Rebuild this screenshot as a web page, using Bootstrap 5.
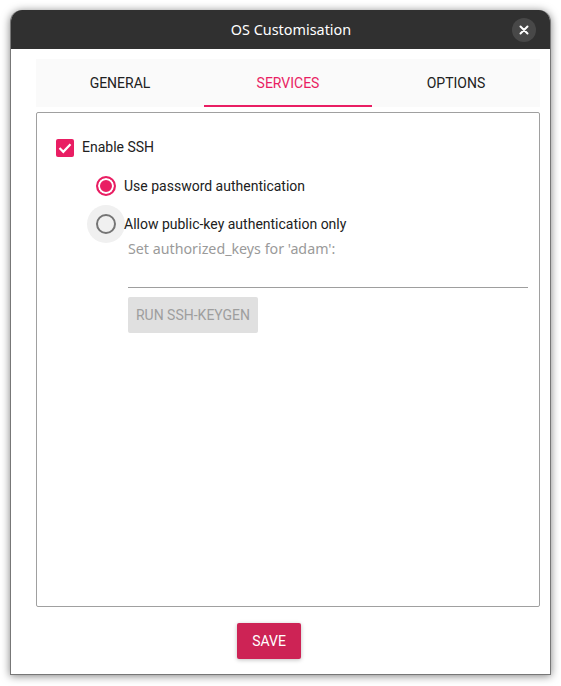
<!DOCTYPE html>
<html lang="en">
<head>
<meta charset="utf-8">
<title>OS Customisation</title>
<link rel="stylesheet" href="https://cdn.jsdelivr.net/npm/bootstrap@5.3.0/dist/css/bootstrap.min.css">
<style>
html, body { height: 100%; }
body { background: #fff; padding: 10px; font-family: Roboto, sans-serif; font-size: 14px; color: #212121; overflow: hidden; }
.os-window { height: 665px; background: #fff; border: 1px solid #777; border-top: 0; border-radius: 12px 12px 0 0; box-shadow: 0 1px 8px rgba(0,0,0,.5); overflow: hidden; }
.os-title { height: 39px; padding-left: 21px; background: #303030; color: #fff; font-family: "Noto Sans", sans-serif; font-size: 14.4px; flex: none; }
.os-close { width: 24px; height: 24px; right: 14px; top: 8px; background: #484848; border: 0; padding: 0; position: absolute; border-radius: 50%; }
.os-body { padding: 10px 10px 15px 25px; min-height: 0; }
.os-tabs { height: 48px; background: #fafafa; flex: none; }
.os-tab { width: 168px; height: 48px; background: none; border: 0; border-bottom: 2px solid transparent; padding: 2px 0 0; font-size: 14px; font-weight: 400; color: #212121; }
.os-tab.is-on { color: #e91e63; border-bottom-color: #e91e63; }
.os-panel { margin-top: 5px; border: 1px solid #a0a0a0; border-radius: 2px; padding: 25px 11px 0 19px; min-height: 0; }
.os-line { height: 20px; }
.os-line-text { margin-top: -1px; }
.os-check { width: 18px; height: 18px; background: #e91e63; border-radius: 2px; flex: none; }
.os-radios { margin: 18px 0 0 40px; }
.os-halo { width: 38px; height: 38px; background: #f0f0f0; border-radius: 50%; flex: none; margin: 0 -1px 0 -9px; }
.os-dot { width: 20px; height: 20px; border-radius: 50%; border: 2px solid #757575; flex: none; }
.os-dot.is-on { border-color: #e91e63; background: #e91e63; box-shadow: inset 0 0 0 2px #fff; }
.os-radio-on { height: 20px; gap: 8px; }
.os-radio-off { height: 38px; margin-top: 9px; }
.os-sub { margin-left: 32px; }
.os-hint { font-family: "Noto Sans", sans-serif; font-size: 14.25px; color: #9a9a9a; line-height: 20px; margin-top: -4px; height: 19px; }
.os-input { height: 30px; border-bottom: 1px solid #9e9e9e; }
.os-keygen { width: 130px; height: 36px; margin-top: 9px; background: #e0e0e0; border: 0; border-radius: 2px; color: #9e9e9e; font-size: 14px; font-weight: 400; padding: 0; }
.os-foot { padding-right: 38px; flex: none; }
.os-save { width: 64px; height: 36px; margin-top: 16px; background: #cd2355; border: 0; border-radius: 2px; color: #fff; font-size: 14px; font-weight: 400; padding: 0; box-shadow: 0 1px 4px rgba(0,0,0,.25); }
</style>
</head>
<body>
<div class="os-window d-flex flex-column">
  <div class="os-title d-flex align-items-center justify-content-center position-relative">
    <span>OS Customisation</span>
    <button class="os-close d-flex align-items-center justify-content-center" aria-label="Close">
      <svg width="10" height="10" viewBox="0 0 10 10"><path d="M1.5 1.5l7 7M8.500 1.500l-7 7" stroke="#fff" stroke-width="2" stroke-linecap="round"/></svg>
    </button>
  </div>
  <div class="os-body d-flex flex-column flex-grow-1">
    <div class="os-tabs d-flex">
      <button class="os-tab">GENERAL</button>
      <button class="os-tab is-on">SERVICES</button>
      <button class="os-tab">OPTIONS</button>
    </div>
    <div class="os-panel flex-grow-1">
      <div class="os-line d-flex align-items-center gap-2">
        <span class="os-check d-flex align-items-center justify-content-center">
          <svg width="16" height="16" viewBox="0 0 16 16"><path d="M2.500 8l3.800 3.800 7.200-7.600" fill="none" stroke="#fff" stroke-width="2.200"/></svg>
        </span>
        <span class="os-line-text">Enable SSH</span>
      </div>
      <div class="os-radios">
        <div class="os-radio-on d-flex align-items-center"><span class="os-dot is-on"></span><span>Use password authentication</span></div>
        <div class="os-radio-off d-flex align-items-center"><span class="os-halo d-flex align-items-center justify-content-center"><span class="os-dot"></span></span><span>Allow public-key authentication only</span></div>
        <div class="os-sub">
          <div class="os-hint">Set authorized_keys for 'adam':</div>
          <div class="os-input"></div>
          <button class="os-keygen d-block" disabled>RUN SSH-KEYGEN</button>
        </div>
      </div>
    </div>
    <div class="os-foot d-flex justify-content-center"><button class="os-save">SAVE</button></div>
  </div>
</div>
<script src="https://cdn.jsdelivr.net/npm/bootstrap@5.3.0/dist/js/bootstrap.bundle.min.js"></script>
</body>
</html>
